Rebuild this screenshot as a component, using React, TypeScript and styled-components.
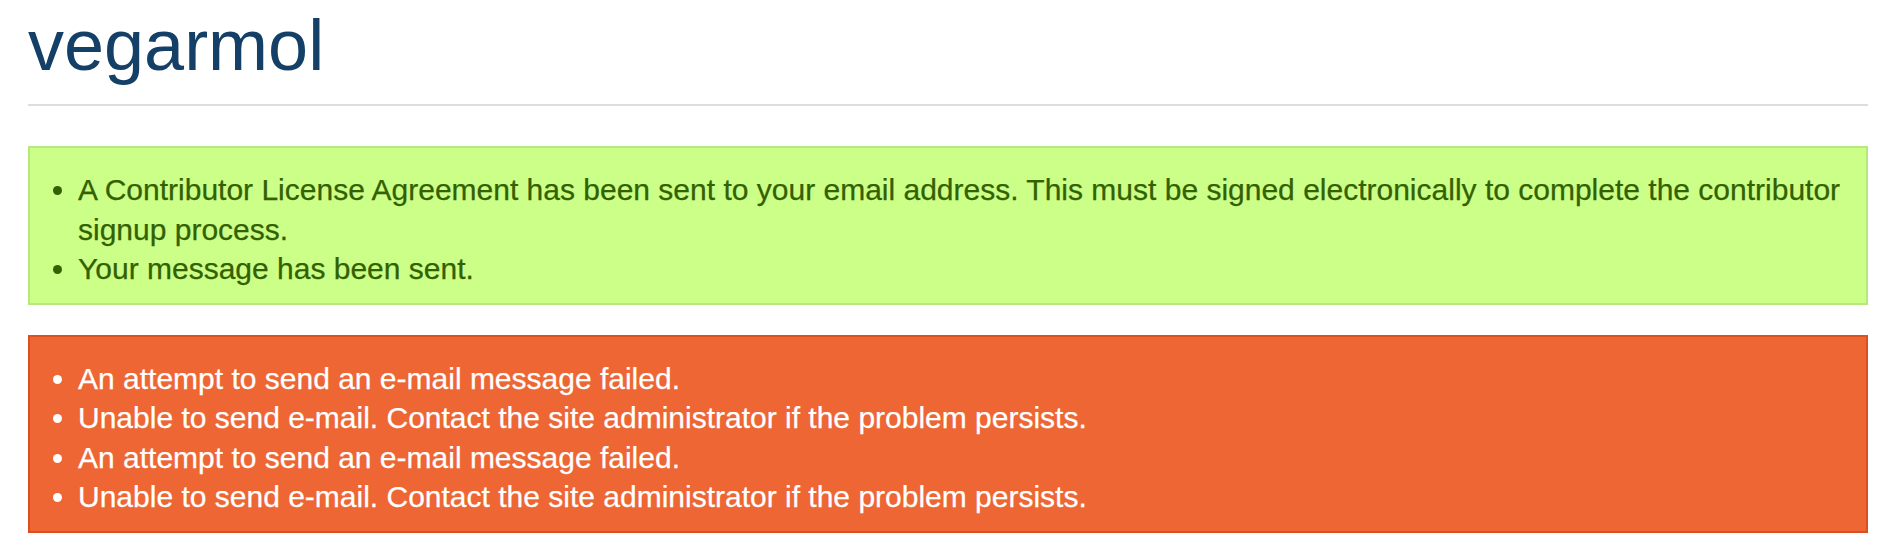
import styled, { createGlobalStyle } from "styled-components"

const GlobalStyle = createGlobalStyle`
  html, body {
    margin: 0;
    padding: 0;
    background: #ffffff;
  }
  body {
    font-family: "Liberation Sans", Arial, Helvetica, sans-serif;
    -webkit-font-smoothing: antialiased;
  }
`

const Page = styled.div`
  display: flex;
  flex-direction: column;
  padding: 5px 30px 0 28px;
`

const Title = styled.h1`
  margin: 0;
  font-size: 72px;
  line-height: 80px;
  font-weight: 400;
  color: #143f66;
`

const Rule = styled.hr`
  margin: 19px 0 40px;
  border: 0;
  height: 2px;
  background: #dddddd;
`

type Tone = "status" | "error"

const tones = {
  status: { bg: "#ccff88", border: "#b8e77f", text: "#336100" },
  error: { bg: "#ed6634", border: "#db5020", text: "#ffffff" },
} as const

const MessageBox = styled.div<{ $tone: Tone }>`
  background: ${(p) => tones[p.$tone].bg};
  border: 2px solid ${(p) => tones[p.$tone].border};
  color: ${(p) => tones[p.$tone].text};
  padding: 22px 8px 14px 18px;
  margin-bottom: 30px;
`

const MessageList = styled.ul`
  margin: 0;
  padding-left: 30px;
  font-size: 30px;
  line-height: 39.5px;
`

const Message = styled.li`
  -webkit-text-stroke: 0.25px currentColor;
`

const statusMessages = [
  "A Contributor License Agreement has been sent to your email address. This must be signed electronically to complete the contributor signup process.",
  "Your message has been sent.",
]

const errorMessages = [
  "An attempt to send an e-mail message failed.",
  "Unable to send e-mail. Contact the site administrator if the problem persists.",
  "An attempt to send an e-mail message failed.",
  "Unable to send e-mail. Contact the site administrator if the problem persists.",
]

export default function App() {
  return (
    <>
      <GlobalStyle />
      <Page>
        <Title>vegarmol</Title>
        <Rule />
        <MessageBox $tone="status">
          <MessageList>
            {statusMessages.map((m, i) => (
              <Message key={i}>{m}</Message>
            ))}
          </MessageList>
        </MessageBox>
        <MessageBox $tone="error">
          <MessageList>
            {errorMessages.map((m, i) => (
              <Message key={i}>{m}</Message>
            ))}
          </MessageList>
        </MessageBox>
      </Page>
    </>
  )
}
